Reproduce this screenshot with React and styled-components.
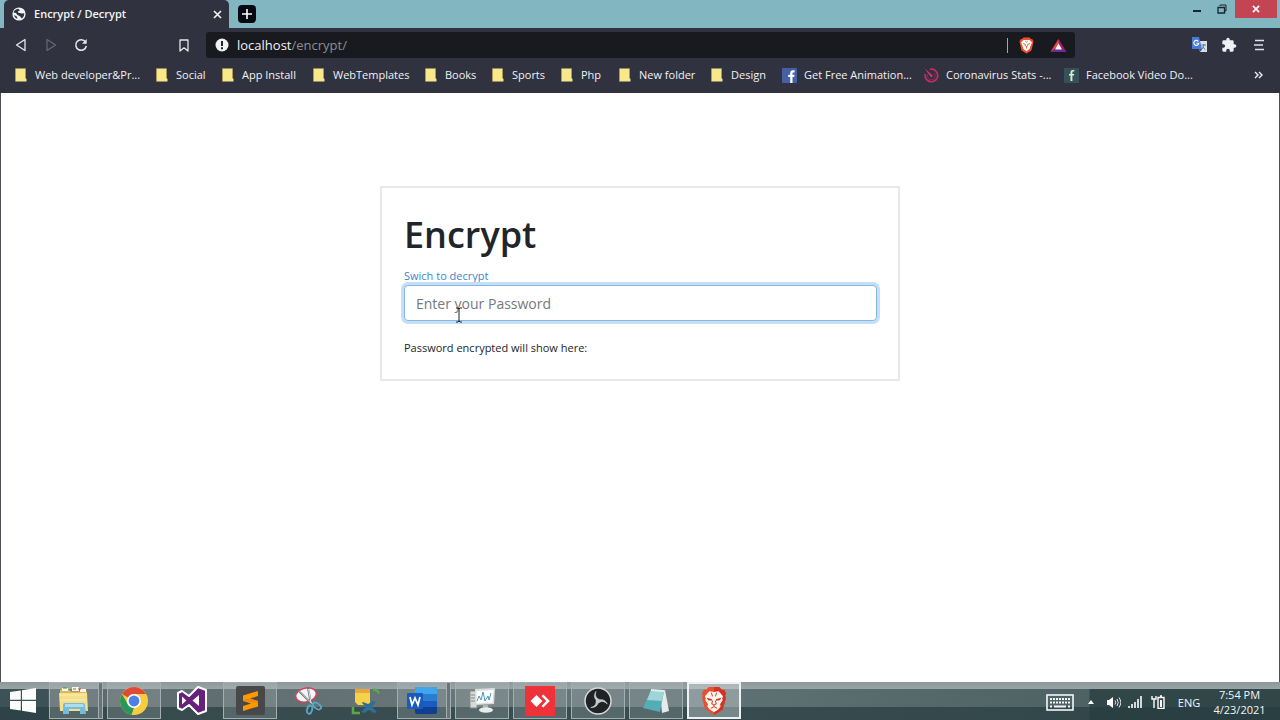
import React from "react";
import styled, { createGlobalStyle, css } from "styled-components";

const GlobalStyle = createGlobalStyle`
  * { box-sizing: border-box; }
  body { margin: 0; font-family: "Segoe UI", "Open Sans", "Noto Sans", sans-serif; font-size: 11px; color: #212529; }
  button { font: inherit; color: inherit; background: none; border: 0; padding: 0; }
`;

const Screen = styled.div`
  min-height: 100vh;
  display: flex;
  flex-direction: column;
  background: #fff;
`;
const TitleBar = styled.header`
  height: 28px;
  display: flex;
  align-items: center;
  background: #82b6c1;
  padding-left: 4px;
`;
const Tab = styled.div`
  height: 28px;
  width: 225px;
  display: flex;
  align-items: center;
  padding: 0 7px 0 8px;
  background: #30333f;
  color: #f2f3f5;
  border-radius: 5px 5px 0 0;
  font-weight: 600;
  svg { flex: none; }
`;
const TabTitle = styled.span`
  flex: 1;
  padding-left: 8px;
  line-height: 16px;
  white-space: nowrap;
`;
const IconButton = styled.button`
  width: ${(p) => p.$w || 20}px;
  height: ${(p) => p.$h || 20}px;
  flex: none;
  display: flex;
  align-items: center;
  justify-content: center;
`;
const NewTab = styled(IconButton)`
  margin-left: 9px;
  background: #070a12;
  border-radius: 4px;
`;
const WindowButtons = styled.div`
  margin-left: auto;
  align-self: flex-start;
  display: flex;
`;
const CloseButton = styled(IconButton)`
  background: #c34553;
  margin-right: 3px;
`;
const Toolbar = styled.div`
  height: 34px;
  display: flex;
  align-items: center;
  background: #30333f;
  padding: 0 11px;
`;
const NavGroup = styled.div`
  display: flex;
  width: 163px;
  gap: 10px;
`;
const AddressBar = styled.div`
  flex: 1;
  height: 26px;
  display: flex;
  align-items: center;
  margin-left: 12px;
  padding: 0 7px 0 9px;
  background: #181a1f;
  border-radius: 3px;
`;
const Url = styled.div`
  flex: 1;
  padding-left: 8px;
  font-size: 13px;
  line-height: 20px;
  color: #8c8e94;
  b { font-weight: 400; color: #f0f1f3; }
`;
const Divider = styled.span`
  width: 1px;
  height: 15px;
  margin-right: 8px;
  background: #a5a6aa;
`;
const ButtonGroup = styled.div`
  display: flex;
  gap: ${(p) => p.$gap}px;
`;
const Extensions = styled(ButtonGroup)`
  margin-left: 114px;
`;
const Bookmarks = styled.nav`
  height: 31px;
  display: flex;
  align-items: flex-start;
  padding: 3px 12px 0 15px;
  background: #30333f;
  color: #f0f1f4;
  gap: 17px;
`;
const Bookmark = styled.a`
  display: flex;
  align-items: center;
  height: 20px;
  gap: ${(p) => (p.$site ? 7 : 8)}px;
  color: inherit;
  text-decoration: none;
  svg { flex: none; }
`;
const BookmarkLabel = styled.span`
  width: ${(p) => p.$w}px;
  line-height: 16px;
  white-space: nowrap;
`;
const More = styled(IconButton)`
  width: 9px;
  margin-left: auto;
  margin-right: 5px;
`;
const Page = styled.main`
  flex: 1;
  padding: 93px 16px 32px;
  border: solid #4d5055;
  border-width: 0 1px;
`;
const Card = styled.section`
  max-width: 520px;
  margin: 0 auto;
  padding: 23px 21px 21px 22px;
  border: 2px solid #e8e8e8;
`;
const Heading = styled.h1`
  margin: 0 0 8px;
  font-size: 36px;
  line-height: 48px;
  font-weight: 600;
`;
const SwitchLink = styled.a`
  display: block;
  line-height: 18px;
  color: #3d85cb;
  text-decoration: none;
`;
const PasswordInput = styled.input`
  display: block;
  width: 100%;
  height: 36px;
  padding: 0 11px;
  border: 1px solid #86b7e0;
  border-radius: 4px;
  box-shadow: 0 0 0 3px #c5dff8;
  outline: 0;
  font: inherit;
  font-size: 14px;
  &::placeholder { color: #74797e; opacity: 1; }
`;
const Result = styled.p`
  margin: 17px 0 0;
  line-height: 20px;
`;
const InputWrap = styled.div`
  position: relative;
`;
const Pointer = styled.svg`
  position: absolute;
  left: 51px;
  top: 22px;
`;
const Taskbar = styled.footer`
  height: 38px;
  display: flex;
  gap: 4px;
  color: #f3f5f5;
  background:
    linear-gradient(#8d989b, #99a4a7 7px, transparent 7px),
    linear-gradient(transparent 25px, rgba(38, 60, 64, 0.7) 25px),
    linear-gradient(90deg, #3c5256 0 48px, #5c696c 49px, #68777a 500px, #5b6e71 800px, #4c6265 1089px, #314649 1090px);
`;
const TaskButton = styled.button`
  width: 54px;
  height: 37px;
  display: flex;
  align-items: center;
  justify-content: center;
  ${(p) => p.$open && css`
    border: 1px solid #a4adaf;
    background: rgba(190, 200, 202, 0.22);
  `}
  ${(p) => p.$active && css`
    border: 2px solid #eef1f1;
    background: rgba(210, 218, 220, 0.42);
  `}
  ${(p) => p.$stack && css`
    box-shadow: inset -3px 0 0 #66757a, inset -4px 0 0 #a4adaf;
    padding-right: 5px;
  `}
`;
const StartButton = styled(TaskButton)`
  width: 45px;
`;
const Tray = styled.div`
  margin-left: auto;
  padding: 2px 15px 0 0;
  display: flex;
  align-items: center;
`;
const TrayItem = styled(IconButton)`
  margin-right: ${(p) => p.$gap}px;
`;
const Clock = styled.time`
  width: 51px;
  line-height: 15px;
  white-space: nowrap;
  display: flex;
  flex-direction: column;
  align-items: center;
`;

const Svg = ({ w, h = w, vb, children }) => (
  <svg width={w} height={h} viewBox={vb || `0 0 ${w} ${h}`} fill="none" aria-hidden="true">{children}</svg>
);

const Globe = () => (
  <Svg w={14}>
    <circle cx="7" cy="7" r="6.6" fill="#f1f2f4" />
    <path d="M1.500 5.500C2 3.500 4 2 6 1.800l2 1.400L5.800 4.500l.6 1.300 3.400.8 2.400-.4c.2 2-.7 4-2.500 5.200L8.300 9.600 5.200 7.700 4 6z" fill="#30333f" />
    <path d="M2 8l2.800 1.600.6 2.200C3.800 11.300 2.400 10 2 8z" fill="#30333f" />
  </Svg>
);
const Cross = ({ size = 9, width = 1.6 }) => (
  <Svg w={size} vb="0 0 9 9"><path d="M1 1l7 7M8 1L1 8" stroke="#f4f5f6" strokeWidth={width} /></Svg>
);
const Folder = () => (
  <Svg w={12} h={14}>
    <path d="M.5.500h10v9.500l1 1v2.500H.5z" fill="#f8e88b" />
    <path d="M.5.500v13M10.500.500v10" stroke="#c5a94d" strokeWidth=".5" />
  </Svg>
);
const FacebookIcon = () => (
  <Svg w={15}>
    <rect width="15" height="15" rx="1" fill="#4560a4" />
    <path d="M8.200 15V9H6.200V6.700h2V5.200C8.200 3.100 9.300 2.300 11 2.300h1.600v2.200h-1.200c-.7 0-.9.3-.9 1v1.200h2.100L12.200 9h-1.700v6z" fill="#fff" />
  </Svg>
);
const StatsIcon = () => (
  <Svg w={15}>
    <path d="M6 1.300A6.300 6.300 0 1 1 1.300 6" stroke="#c92a66" strokeWidth="1.700" />
    <path d="M10.200 5A4 4 0 1 1 3.800 6" stroke="#8f2858" strokeWidth="1" />
    <path d="M.3.300 9 7.700 7.300 9.600z" fill="#d73472" />
  </Svg>
);
const DownloaderIcon = () => (
  <Svg w={15}>
    <rect width="15" height="15" fill="#35515a" />
    <path d="M6.500 13V7.500H5V6h1.500V4.500C6.500 2.700 7.500 2 9 2h1.300v1.600h-.9c-.7 0-1 .3-1 1V6h1.700v1.500H8.400V13z" fill="#d8efc8" />
  </Svg>
);
const LION_SHIELD = "M8.500 1h11l3 3 2.500-.2 2 4.200-1 2 .8 3-3.500 12.500L14 31 4.700 25.500 1.200 13l.8-3-1-2 2-4.200L5.500 4z";
const Lion = ({ w, h }) => (
  <Svg w={w} h={h} vb="0 0 28 32">
    <path d={LION_SHIELD} fill="#ea4f2b" />
    <path d="M14 1h5.500l3 3 2.500-.2 2 4.200-1 2 .8 3-3.500 12.500L14 31z" fill="#d23322" />
    <path d="M9 5.500 14 6.300l5-.8 4.800 5.500-1 2.300.6 1.700-2.900 4.500.6 2.500-2.600 3.200L14 28l-4.500-2.800L6.900 22l.6-2.500L4.600 15l.6-1.700-1-2.300z" fill="#fff5ef" />
    <path d="M6 12.500l5.500 1.300.6 2-4.300-.5zM22 12.500l-5.500 1.300-.6 2 4.300-.5z" fill="#c93926" />
    <path d="M11 7l1.500 4M17 7l-1.500 4M12.500 15.500 11.600 19l2.400 1.500 2.400-1.500-.9-3.500M14 20.500V22M10.500 24l3.500-2 3.500 2" stroke="#d2442e" strokeWidth="1.100" />
  </Svg>
);
const ShieldSmall = () => (
  <Svg w={15} h={17} vb="0 0 15 17">
    <path d="M4.500.5h6L12 2l1.500.2 1 2.300-.3 1.500-1.800 7.500-4.900 3-4.900-3L.8 6 .5 4.500l1-2.300L3 2z" fill="#f0512a" />
    <path d="M4.500 3h6L13 5.500 11.500 9l-1 3-3 2.200-3-2.200-1-3L2 5.500z" fill="#fff" />
    <path d="M4 6.500l2.200.8.300 2M11 6.500l-2.200.8-.3 2M6.300 4.200l1.200 1 1.200-1M7.500 9v2.500" stroke="#e2502e" strokeWidth=".9" />
  </Svg>
);
const Triangle = () => (
  <Svg w={17} h={15}>
    <path d="M8.500 1 .5 14h16z" fill="#a52168" />
    <path d="M8.500 1v7L.5 14z" fill="#ee4a35" />
    <path d="M.5 14 5 10.500h7l4.500 3.500z" fill="#6b2a91" />
    <path d="M8.500 5.500 5 11.400h7z" fill="#fff" />
  </Svg>
);
const Translate = () => (
  <Svg w={17} h={16}>
    <path d="M7 4h9v11H9z" fill="#dbe0e8" />
    <path d="M1 0h7l3 12H1z" fill="#4a7ad7" />
    <path d="M7.300 4.300A2.500 2.500 0 1 0 7.800 6.300H5.500" stroke="#fff" strokeWidth="1.100" />
    <path d="M10.500 8H15M12.700 7v1c0 2-.8 3.500-2.200 4.500M11.500 9.500c.6 1.300 1.500 2.200 2.800 3" stroke="#68758b" />
    <path d="M8.500 12H11l-1.500 3z" fill="#2c51a5" />
  </Svg>
);
const Puzzle = () => (
  <Svg w={16} vb="0 0 24 24">
    <path fill="#eef0f5" d="M20.500 11H19V7a2 2 0 0 0-2-2h-4V3.500a2.500 2.500 0 0 0-5 0V5H4a2 2 0 0 0-2 2v3.800h1.500a2.700 2.700 0 0 1 0 5.400H2V20a2 2 0 0 0 2 2h3.800v-1.500a2.700 2.700 0 0 1 5.400 0V22H17a2 2 0 0 0 2-2v-4h1.500a2.500 2.500 0 0 0 0-5z" />
  </Svg>
);

const Windows = () => (
  <Svg w={26} h={25}>
    <path d="M0 4 10.800 2.400v9.400H0zM12 2.200 26 0v11.800H12zM0 13h10.800v9.500L0 21zM12 13h14v12l-14-2.200z" fill="#fbfcfc" />
  </Svg>
);
const Explorer = () => (
  <Svg w={32} h={29}>
    <path d="M2 3.500h9l2 2h16v19H2z" fill="#d9b958" />
    <path d="M4 2h6v3H4zM14 1h7v4h-7zM22 3h6v3h-6z" fill="#f8f6e5" />
    <path d="M5 2h4M15 3h3" stroke="#359745" /><path d="M20 3h3" stroke="#cf4b3b" />
    <path d="M1 7h28l1 18H2z" fill="#f6df8a" />
    <path d="M2 9h26M2 14h26" stroke="#fbedb0" />
    <path d="M5 19q0-2 2-2h18q2 0 2 2l1 9h-6v-5H11v5H5z" fill="#75bbdc" />
    <path d="M7 18h18l1 3H7z" fill="#b0dded" />
  </Svg>
);
const Chrome = () => (
  <Svg w={28} vb="0 0 28 28">
    <circle cx="14" cy="14" r="14" fill="#f7cd3f" />
    <path d="M1.900 7A14 14 0 0 1 26.100 7H14a7 7 0 0 0-6 3.500z" fill="#df4937" />
    <path d="M1.900 7 8 17.500A7 7 0 0 0 14 21l-2 6.900A14 14 0 0 1 1.900 7z" fill="#27975b" />
    <path d="M14 21l-2.500 6.700 2 .3L20 17.500z" fill="#f7cd3f" />
    <circle cx="14" cy="14" r="7" fill="#fff" /><circle cx="14" cy="14" r="5.400" fill="#4a80e8" />
  </Svg>
);
const VisualStudio = () => (
  <Svg w={30} h={29}>
    <path d="M21 1 29 4v21l-8 3-9-9-7 5-4-2V7l4-2 7 5z" fill="#68217a" stroke="#fff" strokeWidth="2" strokeLinejoin="round" />
    <path d="M5 10.500v8l4.300-4zM22 9v11l-6.500-5.500z" fill="#fff" />
  </Svg>
);
const Sublime = () => (
  <Svg w={29}>
    <rect width="29" height="29" rx="2" fill="#484848" />
    <path d="M22 5v5l-8 2.500 8 2.500v5.500L7 25v-5l8-2.500-8-2.500V9.500z" fill="#ff9800" />
    <path d="m14 12.500 8 2.500v2L7 15v-1z" fill="#ee8a0a" />
  </Svg>
);
const Snip = () => (
  <Svg w={28} h={29}>
    <ellipse cx="12" cy="9" rx="10.500" ry="7" transform="rotate(-12 12 9)" fill="#f5f4f7" stroke="#cb4659" strokeWidth="1.500" />
    <path d="M5 5l14 14M14 2l3 16" stroke="#6b747c" strokeWidth="2" /><path d="m5.500 5 13 13M14.500 3l2.500 14" stroke="#dce1e5" />
    <ellipse cx="23" cy="20" rx="4.500" ry="2.600" transform="rotate(35 23 20)" stroke="#5aa9c4" strokeWidth="1.800" />
    <ellipse cx="15.500" cy="23.500" rx="2.500" ry="4.200" transform="rotate(15 15 24)" stroke="#5aa9c4" strokeWidth="1.800" />
  </Svg>
);
const Convert = () => (
  <Svg w={30} h={28}>
    <path d="M4 2h15v16H7l-3-3z" fill="#f6d24b" /><path d="M4 2h15v4H4z" fill="#e9a63a" />
    <path d="m12 15 5 2 5-3 3 1-4 5 5 5-3 1-5-3-5 3-3-1 5-5-4-4z" fill="#2e6f96" />
    <path d="M22 2.500c3 0 5 1.500 6 4M2 20v6h7" stroke="#58ab43" strokeWidth="2.500" />
  </Svg>
);
const Word = () => (
  <Svg w={30} h={27}>
    <rect x="8" width="22" height="27" rx="2" fill="#1b5cbe" />
    <path d="M8 2a2 2 0 0 1 2-2h18a2 2 0 0 1 2 2v5H8z" fill="#41a5ee" /><path d="M8 7h22v7H8z" fill="#2b7cd3" /><path d="M8 20h22v5a2 2 0 0 1-2 2H10a2 2 0 0 1-2-2z" fill="#103f91" />
    <rect y="6" width="16" height="16" rx="1" fill="#185abd" />
    <path d="m3 10 2 8 3-7 3 7 2-8" stroke="#fff" strokeWidth="1.700" />
  </Svg>
);
const Monitor = () => (
  <Svg w={30} h={27}>
    <path d="M3 4h7v17H3z" fill="#d6d9d6" stroke="#828b8b" /><path d="M4 8h5M4 11h5M4 14h5" stroke="#818c8c" />
    <path d="m8 2 20-1-1 16-19 1z" fill="#d9dedd" /><path d="m9.500 4 17-1-1 12.500-16 1z" fill="#fff" />
    <path d="m10 14 2-5 2 4 2-8 2 9 3-5 1 4 2-7" stroke="#4a9abd" />
    <path d="M16 18h5v4h-5z" fill="#aeb7b6" /><ellipse cx="19" cy="23" rx="7" ry="2.800" fill="#e8eceb" />
  </Svg>
);
const AnyDesk = () => (
  <Svg w={30}>
    <rect width="30" height="30" fill="#ef3239" />
    <path d="m11.500 9 6 6-6 6-6-6zM16.500 10l1.800-1.500 6.500 6.500-6.500 6.500-1.800-1.500 4.800-5z" fill="#fff" />
  </Svg>
);
const Obs = () => (
  <Svg w={28}>
    <circle cx="14" cy="14" r="13" fill="#202226" stroke="#d5d8da" strokeWidth="1.500" />
    {[0, 120, 240].map((angle) => (
      <path key={angle} transform={`rotate(${angle} 14 14)`} d="M14.500 14.500C10.500 13 9 8.500 12 4.500 10.800 8.500 12 11.300 15.500 12.500z" fill="#c9ccce" stroke="#c9ccce" strokeWidth=".6" />
    ))}
  </Svg>
);
const Notepad = () => (
  <Svg w={28} h={26}>
    <path d="m18 3 5-1 4 21-7 2z" fill="#e6ebea" />
    <path d="m9 2 13 1-4 21L1 20z" fill="#55acb6" /><path d="m9 2 13 1-2 10L5 12z" fill="#9dd5d8" />
    <path d="m9 2 13 1" stroke="#e1eeee" strokeWidth="2" />
  </Svg>
);

const bookmarks = [
  ["Web developer&Pr...", 104], ["Social", 29], ["App Install", 54], ["WebTemplates", 75],
  ["Books", 30], ["Sports", 32], ["Php", 21], ["New folder", 55], ["Design", 34],
  ["Get Free Animation...", 103, FacebookIcon], ["Coronavirus Stats -...", 101, StatsIcon],
  ["Facebook Video Do...", 106, DownloaderIcon],
];
const apps = [
  { name: "File Explorer", icon: Explorer, open: true, stack: true },
  { name: "Chrome", icon: Chrome, open: true },
  { name: "Visual Studio", icon: VisualStudio },
  { name: "Sublime Text", icon: Sublime, open: true },
  { name: "Snipping Tool", icon: Snip },
  { name: "Converter", icon: Convert },
  { name: "Word", icon: Word, open: true, stack: true },
  { name: "Task Manager", icon: Monitor, open: true },
  { name: "AnyDesk", icon: AnyDesk, open: true },
  { name: "OBS", icon: Obs, open: true },
  { name: "Notepad", icon: Notepad, open: true },
  { name: "Brave", icon: () => <Lion w={26} h={30} />, active: true },
];

export default function App() {
  return (
    <Screen>
      <GlobalStyle />
      <TitleBar>
        <Tab>
          <Globe />
          <TabTitle>Encrypt / Decrypt</TabTitle>
          <IconButton $w={10} aria-label="Close tab"><Cross /></IconButton>
        </Tab>
        <NewTab $w={18} $h={18} aria-label="New tab">
          <Svg w={12}><path d="M6 1v10M1 6h10" stroke="#fff" strokeWidth="1.600" /></Svg>
        </NewTab>
        <WindowButtons>
          <IconButton $w={24} $h={20} aria-label="Minimize">
            <Svg w={8} h={6}><path d="M0 4h8" stroke="#17272e" strokeWidth="2" /></Svg>
          </IconButton>
          <IconButton $w={26} $h={18} aria-label="Restore">
            <Svg w={10}><path d="M3 2V1h6v6H7.500" stroke="#17272e" /><path d="M1 3.500h6.500V9H1z" stroke="#17272e" strokeWidth="1.300" /></Svg>
          </IconButton>
          <CloseButton $w={42} $h={18} aria-label="Close window"><Cross width={1.9} size={8} /></CloseButton>
        </WindowButtons>
      </TitleBar>
      <Toolbar>
        <NavGroup>
          <IconButton aria-label="Back"><Svg w={12} h={14}><path d="M10 1.500v11L1.500 7z" stroke="#e5e7ed" strokeWidth="1.300" strokeLinejoin="round" /></Svg></IconButton>
          <IconButton aria-label="Forward"><Svg w={12} h={14}><path d="M2 1.500v11L10.500 7z" stroke="#666974" strokeWidth="1.200" strokeLinejoin="round" /></Svg></IconButton>
          <IconButton aria-label="Reload"><Svg w={14}><path d="M11.500 4A5.300 5.300 0 1 0 12.300 8" stroke="#e5e7ed" strokeWidth="1.500" /><path d="M12.700 1v4.700H8z" fill="#e5e7ed" /></Svg></IconButton>
        </NavGroup>
        <IconButton aria-label="Bookmark page"><Svg w={10} h={13}><path d="M1 1h8v11L5 8.800 1 12z" stroke="#e5e7ed" strokeWidth="1.300" strokeLinejoin="round" /></Svg></IconButton>
        <AddressBar>
          <Svg w={14}><circle cx="7" cy="7" r="6.500" fill="#f0f1f2" /><path d="M7 3v5M7 9.200v2" stroke="#181a1f" strokeWidth="1.900" /></Svg>
          <Url><b>localhost</b>/encrypt/</Url>
          <Divider />
          <ButtonGroup $gap={12}>
            <IconButton aria-label="Brave Shields"><ShieldSmall /></IconButton>
            <IconButton aria-label="Rewards"><Triangle /></IconButton>
          </ButtonGroup>
        </AddressBar>
        <Extensions $gap={10}>
          <IconButton aria-label="Translate"><Translate /></IconButton>
          <IconButton aria-label="Extensions"><Puzzle /></IconButton>
          <IconButton aria-label="Menu"><Svg w={10} h={12}><path d="M1 1.500h9M0 6h9M1 10.500h9" stroke="#dfe1e8" strokeWidth="1.300" /></Svg></IconButton>
        </Extensions>
      </Toolbar>
      <Bookmarks>
        {bookmarks.map(([label, w, Icon]) => (
          <Bookmark key={label} href="#" $site={!!Icon}>
            {Icon ? <Icon /> : <Folder />}
            <BookmarkLabel $w={w}>{label}</BookmarkLabel>
          </Bookmark>
        ))}
        <More $w={9} aria-label="More bookmarks"><Svg w={9} h={8}><path d="m1 1 3 3-3 3M5 1l3 3-3 3" stroke="#f0f1f4" strokeWidth="1.400" /></Svg></More>
      </Bookmarks>
      <Page>
        <Card>
          <Heading>Encrypt</Heading>
          <SwitchLink href="#">Swich to decrypt</SwitchLink>
          <InputWrap>
            <PasswordInput type="text" placeholder="Enter your Password" aria-label="Password" />
            <Pointer width="8" height="16" viewBox="0 0 8 16" fill="none" aria-hidden="true">
              <path d="M1 1h2l1 1 1-1h2M4 2v12M1 15h2l1-1 1 1h2" stroke="#1c2226" />
            </Pointer>
          </InputWrap>
          <Result>Password encrypted will show here:</Result>
        </Card>
      </Page>
      <Taskbar>
        <StartButton aria-label="Start"><Windows /></StartButton>
        {apps.map(({ name, icon: Icon, open, active, stack }) => (
          <TaskButton key={name} aria-label={name} $open={open} $active={active} $stack={stack}><Icon /></TaskButton>
        ))}
        <Tray>
          <TrayItem $w={28} $gap={13} aria-label="Touch keyboard">
            <Svg w={28} h={17}><rect x="1" y="1" width="26" height="15" stroke="#f5f7f7" strokeWidth="1.600" /><path d="M4 5h20M4 8.500h20" stroke="#f5f7f7" strokeWidth="2" strokeDasharray="2 1" /><path d="M4 12.500h2M8 12.500h12M22 12.500h2" stroke="#f5f7f7" strokeWidth="2" /></Svg>
          </TrayItem>
          <TrayItem $w={8} $gap={11} aria-label="Show hidden icons"><Svg w={6} h={4}><path d="m0 4 3-4 3 4z" fill="#fff" /></Svg></TrayItem>
          <TrayItem $w={15} $gap={7} aria-label="Volume"><Svg w={15} h={13}><path d="M1 4h2l4-3v11L3 9H1z" fill="#fff" /><path d="M9 4.500q1.500 2 0 4M11 3q2.500 3.500 0 7M13 1.500q3.500 5 0 10" stroke="#dfe5e5" /></Svg></TrayItem>
          <TrayItem $w={14} $gap={9} aria-label="Network"><Svg w={14} h={12}><path d="M1 10v2M4 8v4M7 6v6M10 3v9M13 0v12" stroke="#eef2f2" strokeWidth="1.700" /></Svg></TrayItem>
          <TrayItem $w={14} $gap={13} aria-label="Battery"><Svg w={14} h={14}><path d="M1 1v3h4V1M3 4v9" stroke="#fff" strokeWidth="1.400" /><path d="M7 2.500h6v11H7zM9 1h2" stroke="#fff" strokeWidth="1.400" /><path d="M9 5h2v7H9z" fill="#fff" /></Svg></TrayItem>
          <TrayItem $w={22} $gap={14}>ENG</TrayItem>
          <Clock><span>7:54 PM</span><span>4/23/2021</span></Clock>
        </Tray>
      </Taskbar>
    </Screen>
  );
}
